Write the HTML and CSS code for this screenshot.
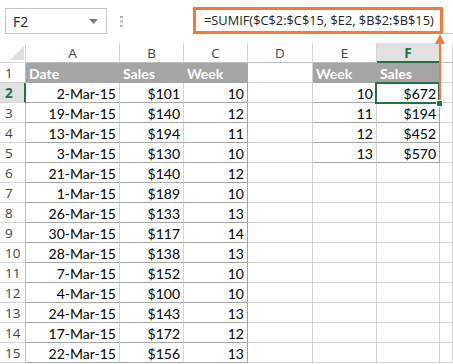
FILE: index.html
```html
<!DOCTYPE html>
<html>
<head>
<meta charset="utf-8">
<link rel="stylesheet" href="styles.css">
</head>
<body>
<div class="app">
  <div class="toolbar">
    <div class="namebox">
      <span class="nb-text">F2</span>
      <svg class="nb-arrow" width="9" height="5" viewBox="0 0 9 5"><polygon points="0,0 9,0 4.5,5" fill="#7a7a7a"/></svg>
    </div>
    <div class="dots">
      <svg width="3" height="11" viewBox="0 0 3 11"><rect x="0" y="0" width="3" height="2" fill="#b4b4b4"/><rect x="0" y="4.5" width="3" height="2" fill="#b4b4b4"/><rect x="0" y="9" width="3" height="2" fill="#b4b4b4"/></svg>
    </div>
    <div class="formula">=SUMIF($C$2:$C$15, $E2, $B$2:$B$15)</div>
    <div class="fbar-rest"></div>
  </div>
  <div class="sheet">
    <div class="c corner"><svg width="14" height="14" viewBox="0 0 14 14"><polygon points="14,0 14,14 0,14" fill="#dedede"/></svg></div>
    <div class="c ch">A</div><div class="c ch">B</div><div class="c ch">C</div><div class="c ch">D</div><div class="c ch">E</div><div class="c ch sel">F</div><div class="c ch"></div>

    <div class="c rh">1</div><div class="c th">Date</div><div class="c th">Sales</div><div class="c th">Week</div><div class="c"></div><div class="c th">Week</div><div class="c th">Sales</div><div class="c"></div>

    <div class="c rh rsel">2</div><div class="c t">2-Mar-15</div><div class="c t">$101</div><div class="c t te">10</div><div class="c"></div><div class="c t">10</div><div class="c t te active">$672<span class="handle"></span></div><div class="c"></div>
    <div class="c rh">3</div><div class="c t">19-Mar-15</div><div class="c t">$140</div><div class="c t te">12</div><div class="c"></div><div class="c t">11</div><div class="c t te">$194</div><div class="c"></div>
    <div class="c rh">4</div><div class="c t">13-Mar-15</div><div class="c t">$194</div><div class="c t te">11</div><div class="c"></div><div class="c t">12</div><div class="c t te">$452</div><div class="c"></div>
    <div class="c rh">5</div><div class="c t">3-Mar-15</div><div class="c t">$130</div><div class="c t te">10</div><div class="c"></div><div class="c t">13</div><div class="c t te">$570</div><div class="c"></div>
    <div class="c rh">6</div><div class="c t">21-Mar-15</div><div class="c t">$140</div><div class="c t te">12</div><div class="c"></div><div class="c"></div><div class="c"></div><div class="c"></div>
    <div class="c rh">7</div><div class="c t">1-Mar-15</div><div class="c t">$189</div><div class="c t te">10</div><div class="c"></div><div class="c"></div><div class="c"></div><div class="c"></div>
    <div class="c rh">8</div><div class="c t">26-Mar-15</div><div class="c t">$133</div><div class="c t te">13</div><div class="c"></div><div class="c"></div><div class="c"></div><div class="c"></div>
    <div class="c rh">9</div><div class="c t">30-Mar-15</div><div class="c t">$117</div><div class="c t te">14</div><div class="c"></div><div class="c"></div><div class="c"></div><div class="c"></div>
    <div class="c rh">10</div><div class="c t">28-Mar-15</div><div class="c t">$138</div><div class="c t te">13</div><div class="c"></div><div class="c"></div><div class="c"></div><div class="c"></div>
    <div class="c rh">11</div><div class="c t">7-Mar-15</div><div class="c t">$152</div><div class="c t te">10</div><div class="c"></div><div class="c"></div><div class="c"></div><div class="c"></div>
    <div class="c rh">12</div><div class="c t">4-Mar-15</div><div class="c t">$100</div><div class="c t te">10</div><div class="c"></div><div class="c"></div><div class="c"></div><div class="c"></div>
    <div class="c rh">13</div><div class="c t">24-Mar-15</div><div class="c t">$143</div><div class="c t te">13</div><div class="c"></div><div class="c"></div><div class="c"></div><div class="c"></div>
    <div class="c rh">14</div><div class="c t">17-Mar-15</div><div class="c t">$172</div><div class="c t te">12</div><div class="c"></div><div class="c"></div><div class="c"></div><div class="c"></div>
    <div class="c rh">15</div><div class="c t">22-Mar-15</div><div class="c t">$156</div><div class="c t te">13</div><div class="c"></div><div class="c"></div><div class="c"></div><div class="c"></div>
  </div>
  <svg class="arrow" width="12" height="70" viewBox="0 0 12 70"><line x1="6" y1="8" x2="6" y2="70" stroke="#f47a3c" stroke-width="2"/><polygon points="6,0 1,10 11,10" fill="#f47a3c"/></svg>
</div>
</body>
</html>
```

FILE: styles.css
```css
* { box-sizing: border-box; }
html, body { margin: 0; padding: 0; background: #fff; }
body { font-family: Lato, "Liberation Sans", sans-serif; color: #000; }
.app { position: relative; width: 453px; height: 364px; overflow: hidden; }

.toolbar { height: 43px; display: flex; align-items: flex-start; }
.namebox {
  margin: 8px 0 0 5px; width: 102px; height: 26px;
  border: 1px solid #c6c6c6; display: flex; align-items: center; justify-content: space-between;
  padding: 0 8px 0 7px; font-family: "Open Sans", sans-serif; font-size: 14px; color: #222;
}
.nb-arrow { display: block; }
.dots { width: 86px; padding: 16px 0 0 13px; }
.dots svg { display: block; }
.formula {
  margin-top: 7px; width: 250px; height: 27px; border: 3px solid #f47a3c;
  font-family: "Open Sans", sans-serif; font-size: 12.8px; color: #222;
  padding: 0 0 0 8px; line-height: 20px; white-space: nowrap; overflow: hidden;
}
.fbar-rest { flex: 1; height: 34px; border-bottom: 1px solid #d4d4d4; }

.sheet {
  display: grid;
  grid-template-columns: 26px 94px 64px 64px 65px 64px 63px 1fr;
  grid-auto-rows: 20px;
  font-size: 14px;
}
.c {
  border-right: 1px solid #d4d4d4; border-bottom: 1px solid #d4d4d4;
  line-height: 19px; padding: 1px 3px 0; white-space: nowrap; overflow: visible;
}
.corner { display: flex; align-items: flex-end; justify-content: flex-end; padding: 0 1px 2px 0; }
.corner svg { display: block; }
.ch { text-align: center; color: #444; font-family: "Open Sans", sans-serif; font-size: 13.5px; border-bottom-color: #bdbdbd; }
.ch.sel { background: #e1e1e1; color: #217346; font-weight: 700; border-bottom: 2px solid #217346; }
.rh { color: #444; font-family: "Open Sans", sans-serif; font-size: 13.5px; padding-left: 5px; border-right-color: #bdbdbd; }
.rh.rsel { background: #e1e1e1; color: #217346; font-weight: 700; border-right: 2px solid #217346; }
.th { background: #a5a5a5; color: #fff; font-weight: 700; border-bottom-color: #a5a5a5; border-right-color: #a5a5a5; }
.t { text-align: right; border-bottom-color: #a5a5a5; }
.te { border-right-color: #a5a5a5; }
.active { position: relative; }
.active::after {
  content: ""; position: absolute; top: -1px; left: -2px; right: -1px; bottom: -2px;
  border: 2px solid #217346; pointer-events: none;
}
.handle {
  position: absolute; right: -4px; bottom: -5px; width: 7px; height: 7px;
  background: #217346; border: 1px solid #fff; z-index: 2;
}
.arrow { position: absolute; left: 434px; top: 34px; display: block; }
```
